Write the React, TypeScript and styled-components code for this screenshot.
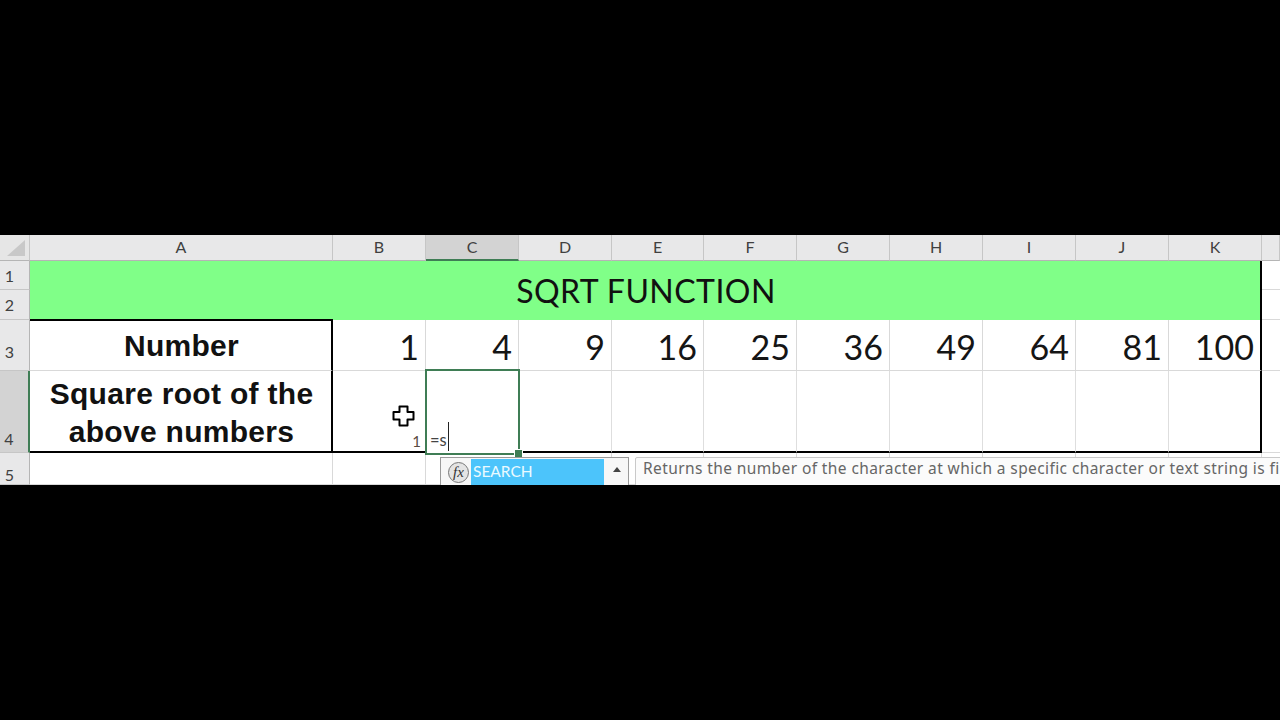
import React from "react";
import styled, { createGlobalStyle } from "styled-components";

const Global = createGlobalStyle`
  html, body { margin: 0; padding: 0; background: #000; }
  body { font-family: "Lato", "Liberation Sans", sans-serif; }
  #root { width: 1280px; height: 720px; overflow: hidden; }
`;

const Page = styled.div`
  width: 1280px;
  height: 720px;
  padding-top: 235px;
  box-sizing: border-box;
  background: #000;
`;

const Sheet = styled.div`
  position: relative;
  width: 1280px;
  height: 250px;
  overflow: hidden;
  background: #fff;
  display: grid;
  grid-template-columns: 30px 303px 93px 93px 93px 92px 93px 93px 93px 93px 93px 93px 18px;
  grid-template-rows: 26px 29px 30px 51px 82px 32px;
`;

const Corner = styled.div`
  background: #e6e6e6;
  border-right: 1px solid #c6c6c6;
  border-bottom: 1px solid #b5b5b5;
  box-sizing: border-box;
  display: flex;
  align-items: flex-end;
  justify-content: flex-end;
  padding: 0 4px 4px 0;
`;

const ColHead = styled.div<{ $active?: boolean }>`
  box-sizing: border-box;
  background: ${p => (p.$active ? "#d3d3d3" : "#e8e8e9")};
  border-right: 1px solid #c6c6c6;
  border-bottom: ${p => (p.$active ? "2px solid #3f7d55" : "1px solid #b5b5b5")};
  color: #404040;
  font-size: 16px;
  display: flex;
  align-items: center;
  justify-content: center;
  padding-bottom: 2px;
`;

const RowHead = styled.div<{ $active?: boolean; $pad: number }>`
  box-sizing: border-box;
  background: ${p => (p.$active ? "#d3d3d3" : "#e8e8e9")};
  border-bottom: 1px solid #c6c6c6;
  border-right: ${p => (p.$active ? "2px solid #3f7d55" : "1px solid #b5b5b5")};
  color: #404040;
  font-size: 16px;
  line-height: 18px;
  display: flex;
  align-items: flex-end;
  justify-content: center;
  padding-bottom: ${p => p.$pad}px;
  padding-right: 10px;
  grid-column: 1;
`;

const Banner = styled.div`
  grid-column: 2 / 13;
  grid-row: 2 / 4;
  background: #80ff88;
  border-right: 2px solid #000;
  box-sizing: border-box;
  display: flex;
  align-items: center;
  justify-content: center;
  padding-left: 2px;
  color: #111;
  font-size: 32px;
  letter-spacing: 0.45px;
`;

const LabelCell = styled.div<{ $top?: boolean }>`
  box-sizing: border-box;
  grid-column: 2;
  background: #fff;
  border-right: 2px solid #000;
  border-bottom: ${p => (p.$top ? "1px solid #d9d9d9" : "2px solid #000")};
  border-top: ${p => (p.$top ? "2px solid #000" : "none")};
  margin-top: ${p => (p.$top ? "-1px" : "0")};
  padding-top: ${p => (p.$top ? "1px" : "3px")};
  padding-left: 2px;
  font-family: "Liberation Sans", sans-serif;
  font-weight: 700;
  font-size: 30px;
  line-height: 38px;
  color: #111;
  text-align: center;
  display: flex;
  align-items: center;
  justify-content: center;
  letter-spacing: 0.3px;
`;

const NumCell = styled.div<{ $last?: boolean }>`
  box-sizing: border-box;
  border-right: ${p => (p.$last ? "2px solid #000" : "1px solid #d9d9d9")};
  border-bottom: 1px solid #d9d9d9;
  color: #151515;
  font-size: 34px;
  display: flex;
  align-items: center;
  justify-content: flex-end;
  padding-top: 2px;
  padding-right: 6px;
`;

const EmptyCell = styled.div<{ $last?: boolean }>`
  box-sizing: border-box;
  border-right: ${p => (p.$last ? "2px solid #000" : "1px solid #dedede")};
  border-bottom: 2px solid #000;
`;

const PlainCell = styled.div<{ $open?: boolean }>`
  box-sizing: border-box;
  border-right: ${p => (p.$open ? "none" : "1px solid #d9d9d9")};
  border-bottom: 1px solid #d9d9d9;
`;

const OverflowOne = styled.div`
  box-sizing: border-box;
  border-right: 1px solid #d9d9d9;
  border-bottom: 2px solid #000;
  display: flex;
  align-items: flex-end;
  justify-content: flex-end;
  padding: 0 4px 1px 0;
  color: #5a4a40;
  font-size: 15px;
`;

const EditCell = styled.div`
  position: absolute;
  left: 425px;
  top: 134px;
  width: 95px;
  height: 86px;
  box-sizing: border-box;
  border: 2px solid #3f7d55;
  background: #fff;
  display: flex;
  align-items: flex-end;
  padding: 0 0 3px 3px;
`;

const EditText = styled.span`
  position: relative;
  font-size: 16.5px;
  line-height: 20px;
  color: #444;
  padding-right: 2px;
  &::after {
    content: "";
    position: absolute;
    right: 0;
    bottom: -1px;
    width: 1px;
    height: 29px;
    background: #222;
  }
`;

const FillHandle = styled.div`
  position: absolute;
  right: -5px;
  bottom: -5px;
  width: 7px;
  height: 7px;
  background: #3f7d55;
  border: 1px solid #fff;
`;

const CursorMark = styled.svg`
  position: absolute;
  left: 392px;
  top: 169px;
`;

const Suggest = styled.div`
  position: absolute;
  left: 440px;
  top: 222px;
  width: 189px;
  height: 32px;
  box-sizing: border-box;
  background: #f7f7f7;
  border: 1px solid #9a9a9a;
  display: flex;
  align-items: flex-start;
  padding-top: 1px;
`;

const FxBadge = styled.div`
  width: 30px;
  height: 26px;
  padding-left: 5px;
  box-sizing: border-box;
  display: flex;
  align-items: center;
  justify-content: center;
  flex: none;
`;

const FxRound = styled.div`
  width: 21px;
  height: 21px;
  flex: none;
  box-sizing: border-box;
  border-radius: 50%;
  border: 1px solid #777;
  background: #e4e4e4;
  color: #333;
  font-family: "Liberation Serif", serif;
  font-style: italic;
  font-size: 15px;
  line-height: 18px;
  text-align: center;
`;

const SuggestName = styled.div`
  width: 133px;
  height: 28px;
  background: #4cc4fb;
  color: #eafaff;
  font-size: 15.5px;
  line-height: 24px;
  padding-left: 2px;
  box-sizing: border-box;
`;

const SuggestArrow = styled.div`
  flex: 1;
  display: flex;
  justify-content: center;
  padding: 8px 0 0 2px;
  &::before {
    content: "";
    border-left: 4px solid transparent;
    border-right: 4px solid transparent;
    border-bottom: 5px solid #444;
  }
`;

const Hint = styled.div`
  position: absolute;
  left: 635px;
  top: 222px;
  width: 660px;
  height: 32px;
  box-sizing: border-box;
  background: #fbfbfb;
  border: 1px solid #c9c9c9;
  border-radius: 2px;
  color: #666;
  font-family: "Noto Sans", sans-serif;
  font-size: 15.5px;
  letter-spacing: 0.4px;
  line-height: 20px;
  padding-left: 7px;
  white-space: nowrap;
`;

const cols = ["A", "B", "C", "D", "E", "F", "G", "H", "I", "J", "K", ""];
const numbers = [1, 4, 9, 16, 25, 36, 49, 64, 81, 100];

export default function App() {
  return (
    <>
      <Global />
      <Page>
        <Sheet>
          <Corner>
            <svg width="18" height="16" viewBox="0 0 18 16">
              <path d="M18 0V16H0Z" fill="#c8c8c8" />
            </svg>
          </Corner>
          {cols.map((c, i) => (
            <ColHead key={`col-${i}`} $active={c === "C"}>{c}</ColHead>
          ))}

          <RowHead $pad={4}>1</RowHead>
          <Banner>SQRT FUNCTION</Banner>
          <PlainCell $open />

          <RowHead $pad={5}>2</RowHead>
          <PlainCell $open />

          <RowHead $pad={9}>3</RowHead>
          <LabelCell $top>Number</LabelCell>
          {numbers.map((n, i) => (
            <NumCell key={n} $last={i === numbers.length - 1}>{n}</NumCell>
          ))}
          <PlainCell $open />

          <RowHead $active $pad={4}>4</RowHead>
          <LabelCell>Square root of the<br />above numbers</LabelCell>
          <OverflowOne>1</OverflowOne>
          {numbers.slice(1).map((n, i) => (
            <EmptyCell key={n} $last={i === numbers.length - 2} />
          ))}
          <PlainCell $open />

          <RowHead $pad={0}>5</RowHead>
          {cols.map((c, i) => (
            <PlainCell key={`r5-${i}`} $open={c === ""} />
          ))}

          <EditCell>
            <EditText>=s</EditText>
            <FillHandle />
          </EditCell>

          <CursorMark width="24" height="24" viewBox="0 0 24 24">
            <path d="M7.5 2.5H15.5V8H21.5V15.5H15.5V21.5H7.5V15.5H1.5V8H7.5Z" fill="#fff" stroke="#000" strokeWidth="2" strokeLinejoin="round" />
          </CursorMark>

          <Suggest>
            <FxBadge><FxRound>fx</FxRound></FxBadge>
            <SuggestName>SEARCH</SuggestName>
            <SuggestArrow />
          </Suggest>
          <Hint>Returns the number of the character at which a specific character or text string is firs</Hint>
        </Sheet>
      </Page>
    </>
  );
}
